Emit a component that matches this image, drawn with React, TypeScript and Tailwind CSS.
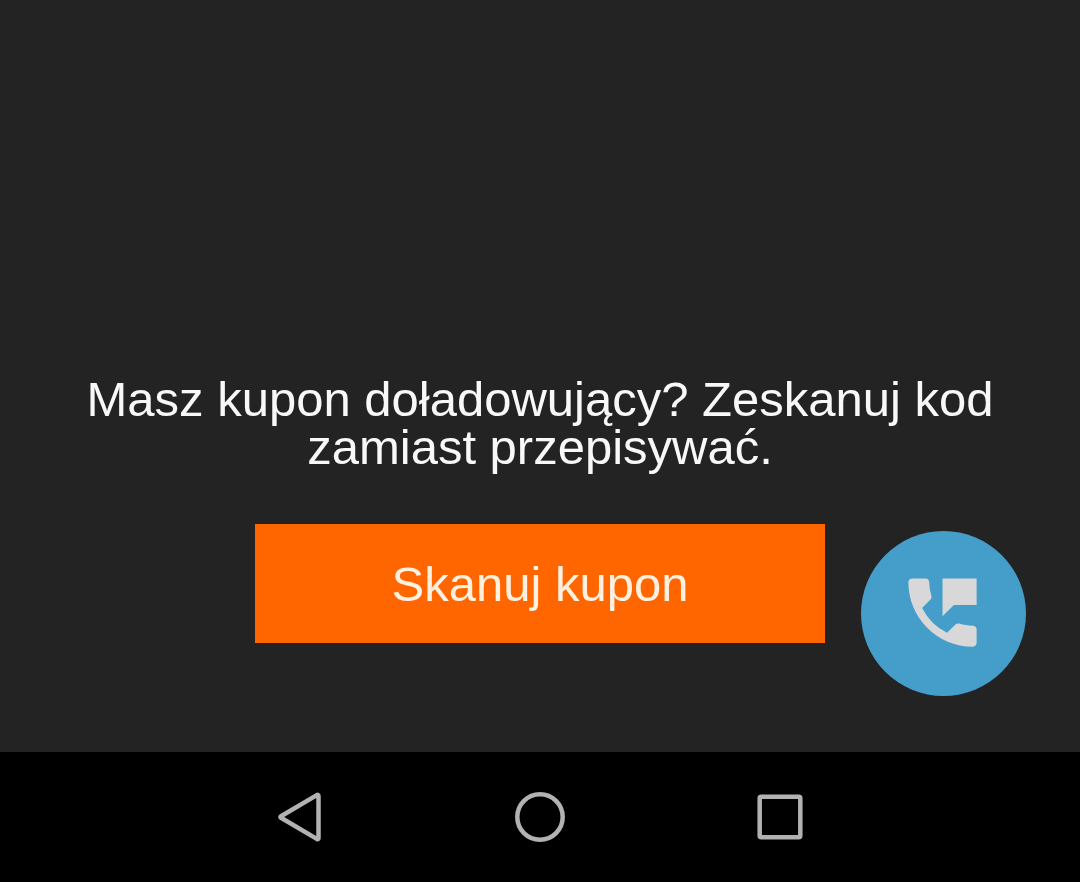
import { ReactNode } from "react";
import { MdPermPhoneMsg } from "react-icons/md";

function NavButton({ label, children }: { label: string; children: ReactNode }) {
  return (
    <button type="button" aria-label={label} className="flex w-60 items-center justify-center">
      <svg
        viewBox="0 0 60 60"
        className="size-[60px] text-[#b2b2b2]"
        fill="none"
        stroke="currentColor"
        strokeWidth="4.5"
        strokeLinejoin="round"
        aria-hidden="true"
      >
        {children}
      </svg>
    </button>
  );
}

export default function App() {
  return (
    <div className="flex min-h-screen flex-col bg-[#232323] font-['Liberation_Sans',Arial,sans-serif]">
      <main className="relative flex grow flex-col items-center justify-end px-16 pb-[109px]">
        <p className="text-center text-[49px] leading-12 text-[#f8f8f8]">
          Masz kupon doładowujący? Zeskanuj kod zamiast przepisywać.
        </p>
        <button
          type="button"
          className="mt-[53px] w-full max-w-[570px] bg-[#ff6600] pt-9 pb-[35px] text-[49px] leading-12 text-[#fff0e0]"
        >
          Skanuj kupon
        </button>
        <button
          type="button"
          aria-label="Kontakt"
          className="absolute right-[54px] bottom-14 flex size-[165px] items-center justify-center rounded-full bg-[#459dca] pr-0.5 pb-0.5 text-[#d8d8d8]"
        >
          <MdPermPhoneMsg className="size-[91px]" aria-hidden="true" />
        </button>
      </main>
      <nav className="flex h-[130px] justify-center bg-black">
        <NavButton label="Wstecz">
          <path d="M11 29.2 46.8 8.1Q48.5 7.2 48.5 9V51Q48.5 52.8 46.8 51.9L11 30.8Q9.8 30 11 29.2Z" />
        </NavButton>
        <NavButton label="Ekran główny">
          <circle cx="30" cy="30" r="22.7" />
        </NavButton>
        <NavButton label="Ostatnie aplikacje">
          <rect x="9.7" y="9.7" width="40.6" height="40.6" rx="1.5" />
        </NavButton>
      </nav>
    </div>
  );
}
